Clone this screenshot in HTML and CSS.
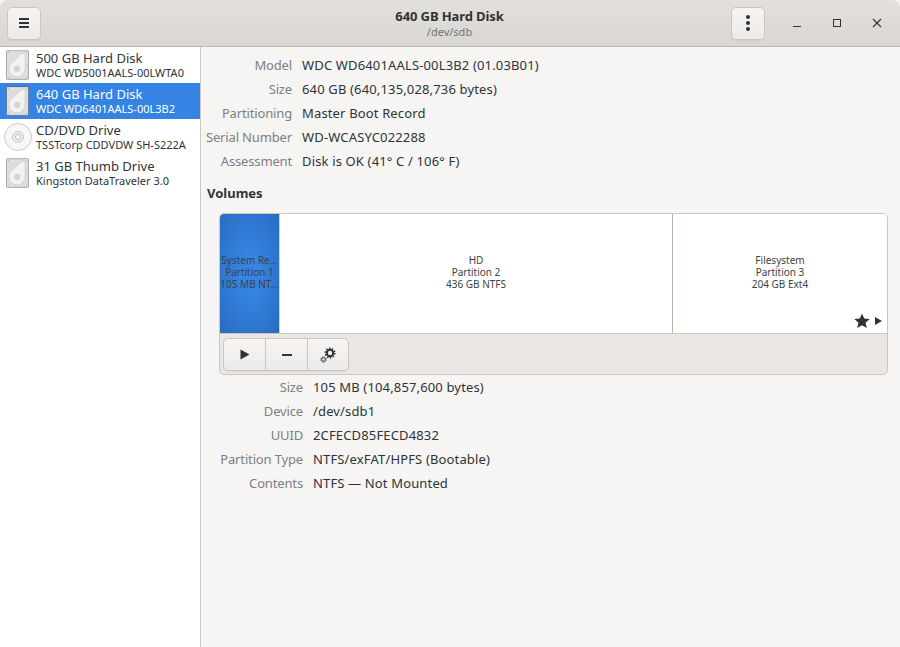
FILE: index.html
```html
<!DOCTYPE html>
<html lang="en">
<head>
<meta charset="utf-8">
<title>640 GB Hard Disk</title>
<link rel="stylesheet" href="styles.css">
</head>
<body>
<svg class="defs" width="0" height="0" aria-hidden="true">
  <defs>
    <symbol id="hdd" viewBox="0 0 24 31">
      <rect x="0.500" y="0.500" width="23" height="30" rx="1" fill="#dedede" stroke="#000" stroke-opacity=".3"/>
      <path d="M20 5V19.500A8.500 8.500 0 0 1 3 19.500C3 16.500 4 15 6 13L15 4.500Q16 3.500 18 3.500H18.500Q20 3.500 20 5z" fill="#f2f2f2" stroke="#c8c8c8" stroke-width="0.700"/>
      <circle cx="11.500" cy="19.500" r="3.300" fill="#d4d4d4"/>
      <g fill="#a5a5a5"><rect x="2" y="2" width="1" height="1"/><rect x="21" y="2" width="1" height="1"/><rect x="21" y="15" width="1" height="1"/><rect x="2" y="28" width="1" height="1"/><rect x="21" y="28" width="1" height="1"/></g>
    </symbol>
    <symbol id="disc" viewBox="0 0 28 28">
      <circle cx="14" cy="14" r="13.500" fill="#f7f7f7" stroke="#cacaca"/>
      <circle cx="14" cy="14" r="5.500" fill="#ededed" stroke="#c8c8c8"/>
      <circle cx="14" cy="14" r="2.500" fill="#fff" stroke="#bcbcbc"/>
    </symbol>
  </defs>
</svg>
<div class="window">
  <header class="titlebar">
    <div class="bar-start">
      <button class="btn" aria-label="Menu">
        <svg width="16" height="16" viewBox="0 0 16 16"><path d="M3 3h10v2H3zM3 7h10v2H3zM3 11h10v2H3z" fill="#2e3436"/></svg>
      </button>
    </div>
    <div class="title">
      <div class="title-main">640 GB Hard Disk</div>
      <div class="title-sub">/dev/sdb</div>
    </div>
    <div class="bar-end">
      <button class="btn btn-dots" aria-label="More">
        <svg width="16" height="20" viewBox="0 0 16 20"><circle cx="8" cy="4" r="2" fill="#2e3436"/><circle cx="8" cy="10" r="2" fill="#2e3436"/><circle cx="8" cy="16" r="2" fill="#2e3436"/></svg>
      </button>
      <div class="wm">
        <svg width="10" height="10" viewBox="0 0 10 10"><path d="M1 8.500h8" stroke="#2e3436" stroke-width="1"/></svg>
      </div>
      <div class="wm">
        <svg width="10" height="10" viewBox="0 0 10 10"><rect x="1.500" y="1.500" width="7" height="7" fill="none" stroke="#2e3436" stroke-width="1"/></svg>
      </div>
      <div class="wm">
        <svg width="10" height="10" viewBox="0 0 10 10"><path d="M1 1l8 8M9 1l-8 8" stroke="#2e3436" stroke-width="1.100"/></svg>
      </div>
    </div>
  </header>
  <div class="body">
    <aside class="sidebar">
      <div class="drive">
        <svg class="drive-icon" width="23" height="30"><use href="#hdd"/></svg>
        <div class="drive-text"><div class="drive-name">500 GB Hard Disk</div><div class="drive-model">WDC WD5001AALS-00LWTA0</div></div>
      </div>
      <div class="drive drive-selected">
        <svg class="drive-icon" width="23" height="30"><use href="#hdd"/></svg>
        <div class="drive-text"><div class="drive-name">640 GB Hard Disk</div><div class="drive-model">WDC WD6401AALS-00L3B2</div></div>
      </div>
      <div class="drive">
        <svg class="drive-icon drive-icon-disc" width="28" height="28"><use href="#disc"/></svg>
        <div class="drive-text"><div class="drive-name">CD/DVD Drive</div><div class="drive-model">TSSTcorp CDDVDW SH-S222A</div></div>
      </div>
      <div class="drive">
        <svg class="drive-icon" width="23" height="30"><use href="#hdd"/></svg>
        <div class="drive-text"><div class="drive-name">31 GB Thumb Drive</div><div class="drive-model">Kingston DataTraveler 3.0</div></div>
      </div>
    </aside>
    <main class="content">
      <dl class="props props-disk">
        <dt>Model</dt><dd>WDC WD6401AALS-00L3B2 (01.03B01)</dd>
        <dt>Size</dt><dd>640 GB (640,135,028,736 bytes)</dd>
        <dt>Partitioning</dt><dd>Master Boot Record</dd>
        <dt>Serial Number</dt><dd>WD-WCASYC022288</dd>
        <dt>Assessment</dt><dd>Disk is OK (41° C / 106° F)</dd>
      </dl>
      <h2 class="section">Volumes</h2>
      <div class="volumes">
        <div class="parts">
          <div class="part part-1"><span>System Re…</span><span>Partition 1</span><span>105 MB NT…</span></div>
          <div class="part part-2"><span>HD</span><span>Partition 2</span><span>436 GB NTFS</span></div>
          <div class="part part-3"><span>Filesystem</span><span>Partition 3</span><span>204 GB Ext4</span>
            <div class="part-flags">
              <svg width="16" height="16" viewBox="0 0 16 16"><path d="M8 .5l2.200 5.100 5.500.5-4.200 3.600 1.300 5.400L8 12.200 3.200 15.100l1.300-5.400L.3 6.100l5.500-.5z" fill="#2e3436"/></svg>
              <svg width="7" height="8" viewBox="0 0 7 8"><path d="M0 0l7 4-7 4z" fill="#2e3436"/></svg>
            </div>
          </div>
        </div>
        <div class="vol-toolbar">
          <div class="linked">
            <button aria-label="Mount"><svg width="10" height="11" viewBox="0 0 10 11"><path d="M0.500 0.500l9 5-9 5z" fill="#2e3436"/></svg></button>
            <button aria-label="Remove"><svg width="10" height="2" viewBox="0 0 10 2"><path d="M0 0h10v2H0z" fill="#2e3436"/></svg></button>
            <button aria-label="Settings"><svg width="16" height="16" viewBox="0 0 16 16">
              <circle cx="10" cy="6" r="3.200" fill="none" stroke="#2e3436" stroke-width="2"/>
              <circle cx="10" cy="6" r="4.800" fill="none" stroke="#2e3436" stroke-width="1.400" stroke-dasharray="1.500 1.500"/>
              <circle cx="3.500" cy="12.500" r="1.800" fill="none" stroke="#2e3436" stroke-width="1"/>
              <circle cx="3.500" cy="12.500" r="2.800" fill="none" stroke="#2e3436" stroke-width="1" stroke-dasharray="1 1.200"/>
            </svg></button>
          </div>
        </div>
      </div>
      <dl class="props props-vol">
        <dt>Size</dt><dd>105 MB (104,857,600 bytes)</dd>
        <dt>Device</dt><dd>/dev/sdb1</dd>
        <dt>UUID</dt><dd>2CFECD85FECD4832</dd>
        <dt>Partition Type</dt><dd>NTFS/exFAT/HPFS (Bootable)</dd>
        <dt>Contents</dt><dd>NTFS — Not Mounted</dd>
      </dl>
    </main>
  </div>
</div>
</body>
</html>
```
FILE: styles.css
```css
* { box-sizing: border-box; }
html, body { margin: 0; height: 100%; }
body { background: #f6f5f4; font-family: "Noto Sans", "Open Sans", sans-serif; font-size: 13px; color: #2e3436; overflow: hidden; }
.defs { position: absolute; }
.window { width: 900px; height: 647px; display: flex; flex-direction: column; }

.titlebar { height: 47px; flex: none; display: grid; grid-template-columns: 1fr auto 1fr; align-items: center; background: linear-gradient(#e3e0dc, #dad7d2); border-bottom: 1px solid #bfb8b1; border-radius: 8px 8px 0 0; }
.bar-start { display: flex; padding-left: 7px; }
.bar-end { display: flex; justify-content: flex-end; align-items: center; }
.btn { width: 34px; height: 33px; padding: 0; display: flex; align-items: center; justify-content: center; background: linear-gradient(#f6f5f4, #edebe9); border: 1px solid #cdc7c2; border-radius: 5px; box-shadow: 0 1px 1px rgba(0,0,0,.05); }
.btn-dots { margin-right: 12px; }
.wm { width: 40px; height: 33px; display: flex; align-items: center; justify-content: center; }
.wm:last-child { margin-right: 3px; }
.title { text-align: center; line-height: 15px; margin-top: 2px; margin-left: -1px; }
.title-main { font-weight: 700; font-size: 13px; letter-spacing: -.1px; }
.title-sub { font-size: 11px; color: #6f7577; }

.body { flex: 1; display: flex; min-height: 0; }
.sidebar { width: 201px; flex: none; background: #fff; border-right: 1px solid #cdc7c2; }
.drive { height: 36px; display: flex; align-items: center; color: #2e3436; padding-left: 6px; }
.drive-icon { flex: none; margin-right: 7px; }
.drive-icon-disc { margin-left: -2px; margin-right: 4px; }
.drive-selected { background: #3584e4; color: #fff; }
.drive-text { min-width: 0; }
.drive-name { font-size: 13px; line-height: 16px; white-space: nowrap; }
.drive-model { font-size: 11px; line-height: 14px; white-space: nowrap; }

.content { flex: 1; min-width: 0; }
.props { margin: 0; display: grid; grid-auto-rows: 24px; align-items: center; column-gap: 10px; }
.props dt { text-align: right; color: #7b8083; letter-spacing: -.15px; white-space: nowrap; }
.props dd { margin: 0; white-space: nowrap; letter-spacing: .15px; }
.props-disk { grid-template-columns: 91px 1fr; margin-top: 6px; }
.props-vol { grid-template-columns: 102px 1fr; margin-top: 0; }
.section { margin: 8px 0 0 6px; height: 24px; line-height: 24px; font-size: 13px; font-weight: 700; }

.volumes { margin: 8px 12px 0 18px; height: 162px; border: 1px solid #cdc7c2; border-radius: 5px; background: #e9e6e3; overflow: hidden; display: flex; flex-direction: column; }
.parts { height: 120px; flex: none; display: flex; background: #fff; border-bottom: 1px solid #cdc7c2; }
.part { display: flex; flex-direction: column; align-items: center; justify-content: center; font-size: 10px; line-height: 12px; color: #3d4345; border-right: 1px solid #b9b4ae; white-space: nowrap; overflow: hidden; position: relative; padding-bottom: 3px; }
.part-1 { width: 60px; background: radial-gradient(ellipse at center, #3584e4 20%, #2a6cc0 100%); border-right: 1px solid #d5d0cb; }
.part-2 { width: 393px; }
.part-3 { flex: 1; border-right: 0; }
.part-flags { position: absolute; right: 5px; bottom: 4px; display: flex; align-items: center; gap: 5px; }
.vol-toolbar { flex: 1; padding: 4px 3px; display: flex; align-items: flex-start; }
.linked { display: flex; width: 126px; height: 33px; border: 1px solid #cdc7c2; border-radius: 5px; overflow: hidden; background: linear-gradient(#f6f5f4, #edebe9); box-shadow: 0 1px 1px rgba(0,0,0,.05); }
.linked button { flex: none; width: 42px; height: 100%; padding: 0; background: none; border: 0; border-right: 1px solid #cdc7c2; display: flex; align-items: center; justify-content: center; }
.linked button:last-child { flex: 1; width: auto; border-right: 0; }
```
